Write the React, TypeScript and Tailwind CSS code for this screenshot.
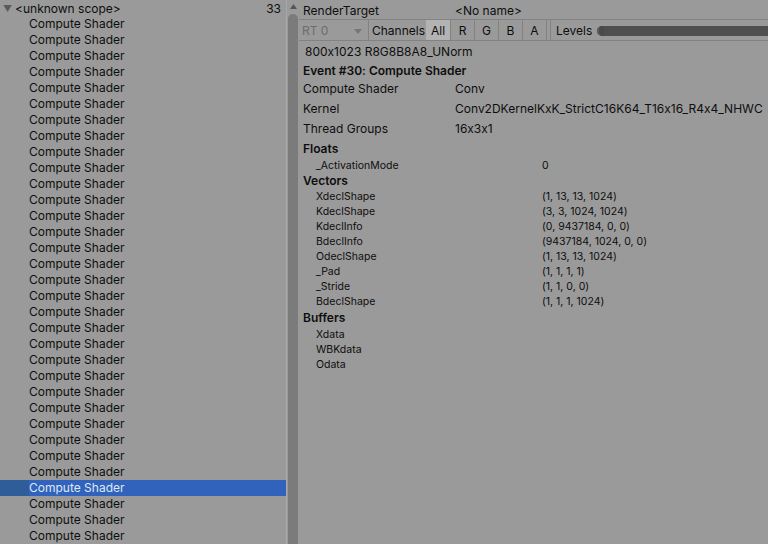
import React from 'react';

const vectors: [string, string][] = [
  ['XdeclShape', '(1, 13, 13, 1024)'],
  ['KdeclShape', '(3, 3, 1024, 1024)'],
  ['KdeclInfo', '(0, 9437184, 0, 0)'],
  ['BdeclInfo', '(9437184, 1024, 0, 0)'],
  ['OdeclShape', '(1, 13, 13, 1024)'],
  ['_Pad', '(1, 1, 1, 1)'],
  ['_Stride', '(1, 1, 0, 0)'],
  ['BdeclShape', '(1, 1, 1, 1024)'],
];

const buffers = ['Xdata', 'WBKdata', 'Odata'];

function EventList() {
  const events = Array.from({ length: 33 }, (_, i) => i + 1);
  return (
    <div className="flex w-[286px] shrink-0 flex-col">
      <div className="flex h-4 items-center pt-[1px] pr-[5px] text-[12px]">
        <span className="ml-[3px] w-[12px] text-[9px] leading-none text-[#5a5a5a]">▼</span>
        <span>&lt;unknown scope&gt;</span>
        <span className="ml-auto">33</span>
      </div>
      {events.map(n => {
        const selected = n === 30;
        return (
          <div
            key={n}
            className={
              selected
                ? 'flex h-4 items-center bg-[#3163bc] text-[12px] text-[#dfe8f5]'
                : 'flex h-4 items-center text-[12px]'
            }
          >
            <span className={selected ? 'h-full w-[29px] shrink-0 bg-[#2f5d99]' : 'w-[29px] shrink-0'} />
            <span>Compute Shader</span>
          </div>
        );
      })}
    </div>
  );
}

function Scrollbar() {
  return (
    <div className="flex w-[13px] shrink-0 flex-col border-l border-[#a9a9a9]">
      <div className="flex h-[14px] items-start justify-center pt-[4px]">
        <svg width="7" height="5" viewBox="0 0 7 5">
          <path d="M0 5 L3.5 0 L7 5 Z" fill="#555" />
        </svg>
      </div>
      <div className="mx-[1px] flex-1 rounded-t-[5px] bg-[#7b7b7b]" />
    </div>
  );
}

function Toolbar() {
  const channels = ['R', 'G', 'B', 'A'];
  return (
    <div className="flex h-[21px] items-stretch border-b border-[#828282] text-[12px]">
      <div className="flex w-[70px] items-center justify-between border-r border-[#828282] pt-[2px] pl-[3px] pr-[6px] text-[#6c6c6c]">
        <span>RT 0</span>
        <svg width="8" height="5" viewBox="0 0 8 5">
          <path d="M0 0 L8 0 L4 5 Z" fill="#777" />
        </svg>
      </div>
      <div className="flex w-[57px] items-center pt-[2px] pl-[3px]">Channels</div>
      <div className="flex w-[24px] items-center justify-center bg-[#b3b3b3] pt-[2px]">All</div>
      {channels.map(c => (
        <div key={c} className="flex w-[24px] items-center justify-center border-l border-[#828282] pt-[2px]">
          {c}
        </div>
      ))}
      <div className="w-[4px] border-l border-[#828282]" />
      <div className="flex flex-1 items-center border-l border-[#828282] pt-[2px] pl-[5px]">
        <span>Levels</span>
        <div className="ml-[5px] flex h-[10px] flex-1 items-center rounded-l-full bg-[#4f4f4f]">
          <div className="h-[10px] w-[7px] rounded-l-full border-l-2 border-[#5c5c5c] bg-[#4a4a4a]" />
        </div>
      </div>
    </div>
  );
}

function Details() {
  return (
    <div className="flex min-w-0 flex-1 flex-col">
      <div className="flex h-[20px] items-center border-b border-[#828282] pt-[2px] pl-[4px] text-[12px]">
        <span className="w-[152px]">RenderTarget</span>
        <span>&lt;No name&gt;</span>
      </div>
      <Toolbar />
      <div className="mt-[1px] flex flex-col pl-[4px] text-[12px]">
        <div className="flex h-[20px] items-center pl-[2px]">800x1023 R8G8B8A8_UNorm</div>
        <div className="flex h-[17px] items-center font-semibold">Event #30: Compute Shader</div>
        <div className="flex h-[20px] items-center">
          <span className="w-[152px]">Compute Shader</span>
          <span>Conv</span>
        </div>
        <div className="flex h-[20px] items-center">
          <span className="w-[152px]">Kernel</span>
          <span className="whitespace-nowrap">Conv2DKernelKxK_StrictC16K64_T16x16_R4x4_NHWC</span>
        </div>
        <div className="flex h-[20px] items-center">
          <span className="w-[152px]">Thread Groups</span>
          <span>16x3x1</span>
        </div>
        <div className="flex h-[19px] items-center font-semibold">Floats</div>
        <div className="flex h-[15px] items-center pl-[13px] text-[10.5px]">
          <span className="w-[226px]">_ActivationMode</span>
          <span>0</span>
        </div>
        <div className="flex h-[16px] items-center font-semibold">Vectors</div>
        {vectors.map(([k, v]) => (
          <div key={k} className="flex h-[15px] items-center pl-[13px] text-[10.5px]">
            <span className="w-[226px]">{k}</span>
            <span>{v}</span>
          </div>
        ))}
        <div className="flex h-[18px] items-center font-semibold">Buffers</div>
        {buffers.map(b => (
          <div key={b} className="flex h-[15px] items-center pl-[13px] text-[10.5px]">
            {b}
          </div>
        ))}
      </div>
    </div>
  );
}

export default function App() {
  return (
    <div className="flex h-[544px] w-[768px] overflow-hidden bg-[#9a9a9a] font-['Inter',sans-serif] text-[#0e0e0e] [font-feature-settings:'calt'_0]">
      <EventList />
      <Scrollbar />
      <Details />
    </div>
  );
}
